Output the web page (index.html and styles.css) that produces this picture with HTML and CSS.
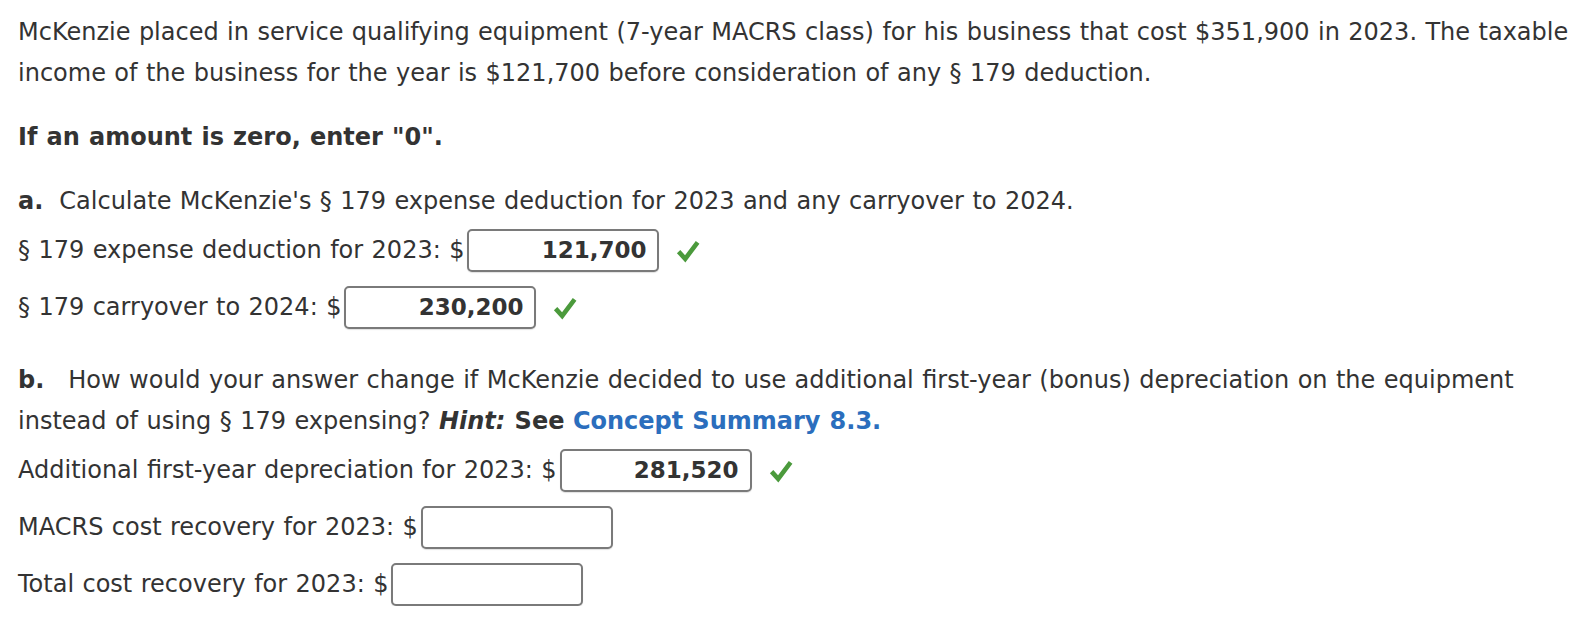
FILE: index.html
```html
<!DOCTYPE html>
<html lang="en">
<head>
<meta charset="utf-8">
<title>Section 179 question</title>
<link rel="stylesheet" href="styles.css">
</head>
<body>
<div class="page">
  <p class="intro">McKenzie placed in service qualifying equipment (7-year MACRS class) for his business that cost $351,900 in 2023. The taxable income of the business for the year is $121,700 before consideration of any § 179 deduction.</p>
  <p class="note">If an amount is zero, enter "0".</p>

  <p class="part"><span class="part-label">a.</span>Calculate McKenzie's § 179 expense deduction for 2023 and any carryover to 2024.</p>
  <div class="row first">
    <span class="label">§ 179 expense deduction for 2023: $</span>
    <span class="field filled">121,700</span>
    <svg class="check" viewBox="0 0 24 24" width="24" height="24" aria-hidden="true"><polyline points="2.6,12.6 9.2,19.8 21.6,3.4" fill="none" stroke="#4b9a3c" stroke-width="4.6" stroke-linejoin="miter"/></svg>
  </div>
  <div class="row">
    <span class="label">§ 179 carryover to 2024: $</span>
    <span class="field filled">230,200</span>
    <svg class="check" viewBox="0 0 24 24" width="24" height="24" aria-hidden="true"><polyline points="2.6,12.6 9.2,19.8 21.6,3.4" fill="none" stroke="#4b9a3c" stroke-width="4.6" stroke-linejoin="miter"/></svg>
  </div>

  <p class="part partb"><span class="part-label wide">b.</span>How would your answer change if McKenzie decided to use additional first-year (bonus) depreciation on the equipment instead of using § 179 expensing? <b><i>Hint:</i> See</b> <a class="link" href="#">Concept Summary 8.3.</a></p>
  <div class="row first">
    <span class="label">Additional first-year depreciation for 2023: $</span>
    <span class="field filled">281,520</span>
    <svg class="check" viewBox="0 0 24 24" width="24" height="24" aria-hidden="true"><polyline points="2.6,12.6 9.2,19.8 21.6,3.4" fill="none" stroke="#4b9a3c" stroke-width="4.6" stroke-linejoin="miter"/></svg>
  </div>
  <div class="row">
    <span class="label">MACRS cost recovery for 2023: $</span>
    <span class="field"></span>
  </div>
  <div class="row">
    <span class="label">Total cost recovery for 2023: $</span>
    <span class="field"></span>
  </div>
</div>
</body>
</html>
```

FILE: styles.css
```css
html, body {
  margin: 0;
  padding: 0;
  background: #ffffff;
}

.page {
  padding: 12px 8px 0 18px;
  font-family: "DejaVu Sans", Verdana, sans-serif;
  font-size: 24px;
  word-spacing: 0.8px;
  line-height: 41px;
  color: #333333;
}

p {
  margin: 0;
}

.note {
  margin-top: 23px;
  font-weight: bold;
}

.part {
  margin-top: 23px;
}

.partb {
  margin-top: 31px;
}

.part-label {
  font-weight: bold;
  margin-right: 16px;
}

.part-label.wide {
  margin-right: 24px;
}

.row {
  display: flex;
  align-items: center;
  height: 43px;
  margin-top: 14px;
}

.row.first {
  margin-top: 7px;
}

.label {
  white-space: nowrap;
  margin-right: 3px;
}

.field {
  box-sizing: border-box;
  width: 192px;
  height: 43px;
  border: 2px solid #7a7a7a;
  border-radius: 5px;
  padding: 0 11px;
  display: flex;
  align-items: center;
  justify-content: flex-end;
  font-size: 23px;
  font-weight: bold;
  color: #333333;
  background: #ffffff;
  box-shadow: 0 1px 1px rgba(0, 0, 0, 0.12);
}

.check {
  margin-left: 17px;
  flex: none;
}

.link {
  color: #2b6ebd;
  font-weight: bold;
  text-decoration: none;
}
```
